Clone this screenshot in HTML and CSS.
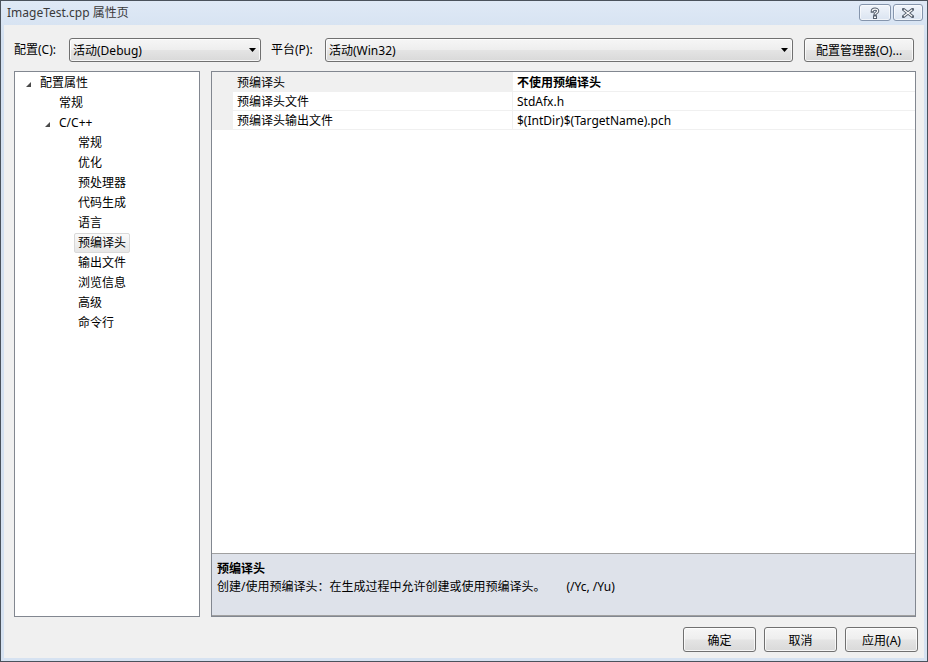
FILE: index.html
```html
<!DOCTYPE html>
<html lang="zh-CN">
<head>
<meta charset="utf-8">
<title>ImageTest.cpp 属性页</title>
<link rel="stylesheet" href="styles.css">
</head>
<body>
<div class="window">
  <div class="titlebar">
    <span class="title">ImageTest.cpp 属性页</span>
    <div class="caption-buttons">
      <span class="cap-btn help">
        <svg width="10" height="12" viewBox="0 0 10 12">
          <path d="M2.3 4.2 C2.3 1.4 7.7 1.4 7.7 4 C7.7 5.7 5 5.8 5 7.6" fill="none" stroke="#56606e" stroke-width="3.2" stroke-linecap="square"/>
          <path d="M2.3 4.2 C2.3 1.4 7.7 1.4 7.7 4 C7.7 5.7 5 5.8 5 7.6" fill="none" stroke="#fdfdfd" stroke-width="1.2"/>
          <rect x="3.5" y="9" width="3" height="2.5" fill="#fdfdfd" stroke="#56606e" stroke-width="1"/>
        </svg>
      </span>
      <span class="cap-btn close">
        <svg width="12" height="10" viewBox="0 0 12 10">
          <path d="M1.5 1.5 L10.5 8.5 M10.5 1.5 L1.5 8.5" fill="none" stroke="#56606e" stroke-width="3.2" stroke-linecap="square"/>
          <path d="M1.8 1.7 L10.2 8.3 M10.2 1.7 L1.8 8.3" fill="none" stroke="#fdfdfd" stroke-width="1.2"/>
        </svg>
      </span>
    </div>
  </div>

  <div class="client">
    <div class="toprow">
      <span class="lbl lbl-config">配置(C):</span>
      <div class="combo combo-config">
        <span>活动(Debug)</span>
        <svg class="arrow" width="7" height="4" viewBox="0 0 7 4"><polygon points="0,0 7,0 3.5,4" fill="#000"/></svg>
      </div>
      <span class="lbl lbl-platform">平台(P):</span>
      <div class="combo combo-platform">
        <span>活动(Win32)</span>
        <svg class="arrow" width="7" height="4" viewBox="0 0 7 4"><polygon points="0,0 7,0 3.5,4" fill="#000"/></svg>
      </div>
      <button class="btn btn-manager">配置管理器(O)...</button>
    </div>

    <div class="main">
      <div class="tree">
        <div class="node l0"><span class="exp"><svg width="5" height="5" viewBox="0 0 5 5"><polygon points="5,0 5,5 0,5" fill="#4a4a4a"/></svg></span><span class="txt">配置属性</span></div>
        <div class="node l1"><span class="exp"></span><span class="txt">常规</span></div>
        <div class="node l1"><span class="exp"><svg width="5" height="5" viewBox="0 0 5 5"><polygon points="5,0 5,5 0,5" fill="#4a4a4a"/></svg></span><span class="txt">C/C++</span></div>
        <div class="node l2"><span class="exp"></span><span class="txt">常规</span></div>
        <div class="node l2"><span class="exp"></span><span class="txt">优化</span></div>
        <div class="node l2"><span class="exp"></span><span class="txt">预处理器</span></div>
        <div class="node l2"><span class="exp"></span><span class="txt">代码生成</span></div>
        <div class="node l2"><span class="exp"></span><span class="txt">语言</span></div>
        <div class="node l2"><span class="exp"></span><span class="txt selected">预编译头</span></div>
        <div class="node l2"><span class="exp"></span><span class="txt">输出文件</span></div>
        <div class="node l2"><span class="exp"></span><span class="txt">浏览信息</span></div>
        <div class="node l2"><span class="exp"></span><span class="txt">高级</span></div>
        <div class="node l2"><span class="exp"></span><span class="txt">命令行</span></div>
      </div>

      <div class="panel">
        <div class="grid">
          <div class="row row-first row-selected">
            <div class="gutter"></div>
            <div class="name">预编译头</div>
            <div class="value value-bold">不使用预编译头</div>
          </div>
          <div class="row">
            <div class="gutter"></div>
            <div class="name">预编译头文件</div>
            <div class="value">StdAfx.h</div>
          </div>
          <div class="row">
            <div class="gutter"></div>
            <div class="name">预编译头输出文件</div>
            <div class="value">$(IntDir)$(TargetName).pch</div>
          </div>
        </div>
        <div class="desc">
          <div class="desc-title">预编译头</div>
          <div class="desc-text">创建/使用预编译头：在生成过程中允许创建或使用预编译头。<span class="switches">(/Yc, /Yu)</span></div>
        </div>
      </div>
    </div>

    <div class="bottomrow">
      <button class="btn btn-dlg">确定</button>
      <button class="btn btn-dlg">取消</button>
      <button class="btn btn-dlg">应用(A)</button>
    </div>
  </div>
</div>
</body>
</html>
```

FILE: styles.css
```css
* {
  box-sizing: border-box;
}

html,
body {
  margin: 0;
  padding: 0;
}

body {
  width: 928px;
  height: 662px;
  overflow: hidden;
  font-family: "Noto Sans", "Noto Sans CJK SC", sans-serif;
  font-size: 12px;
  color: #000;
  background: #f0f0f0;
}

.window {
  width: 928px;
  height: 662px;
  border: 1px solid #4a525c;
  background: linear-gradient(#dfe9f6, #d3e0f0 40px, #d6e2f1);
  padding: 0 3px 3px 3px;
  display: flex;
  flex-direction: column;
}

/* ---------- title bar ---------- */
.titlebar {
  height: 24px;
  flex: none;
  display: flex;
  justify-content: space-between;
  padding-left: 3px;
  padding-right: 1px;
}

.title {
  line-height: 24px;
  color: #3a3a3a;
}

.caption-buttons {
  display: flex;
  gap: 2px;
  margin-top: 3px;
  height: 17px;
}

.cap-btn {
  height: 17px;
  border: 1px solid #8595ac;
  border-radius: 3px;
  background: linear-gradient(#f1f5fb, #dae4f1);
  box-shadow: inset 0 0 0 1px rgba(255, 255, 255, 0.6);
  display: flex;
  align-items: center;
  justify-content: center;
}

.help {
  width: 32px;
}

.close {
  width: 30px;
}

/* ---------- client area ---------- */
.client {
  flex: 1;
  background: #f0f0f0;
  padding: 13px 6px 6px 10px;
  display: flex;
  flex-direction: column;
}

.toprow {
  display: flex;
  align-items: center;
  height: 24px;
  flex: none;
}

.lbl {
  line-height: 24px;
  white-space: nowrap;
}

.lbl-config {
  width: 55px;
}

.lbl-platform {
  width: 54px;
  margin-left: 10px;
}

.combo,
.btn {
  border: 1px solid #707070;
  border-radius: 3px;
  background: linear-gradient(#f6f6f6 0%, #eeeeee 48%, #e4e4e4 52%, #d9d9d9 100%);
  box-shadow: inset 0 0 0 1px rgba(255, 255, 255, 0.75);
}

.combo {
  height: 24px;
  display: flex;
  align-items: center;
  justify-content: space-between;
  padding: 0 4px 0 3px;
  white-space: nowrap;
}

.combo-config {
  width: 192px;
}

.combo-platform {
  width: 468px;
}

.arrow {
  flex: none;
}

.btn {
  font: inherit;
  color: #000;
  padding: 0;
  white-space: nowrap;
}

.btn-manager {
  width: 110px;
  height: 24px;
  margin-left: 11px;
}

/* ---------- main area ---------- */
.main {
  display: flex;
  gap: 11px;
  margin-top: 9px;
  margin-right: 2px;
  height: 546px;
  flex: none;
}

.tree {
  width: 186px;
  border: 1px solid #828790;
  background: #fff;
  padding-top: 1px;
}

.node {
  height: 20px;
  line-height: 18px;
  display: flex;
  align-items: center;
  white-space: nowrap;
}

.node.l1 {
  padding-left: 19px;
}

.node.l2 {
  padding-left: 38px;
}

.exp {
  width: 25px;
  flex: none;
  display: flex;
  padding-left: 11px;
  padding-top: 2px;
}

.txt.selected {
  margin-left: -4px;
  padding: 0 3px;
  height: 20px;
  line-height: 18px;
  border: 1px solid #d9d9d9;
  border-radius: 2px;
  background: linear-gradient(#fafafa, #e6e6e6);
}

.panel {
  flex: 1;
  border: 1px solid #828790;
  background: #fff;
  display: flex;
  flex-direction: column;
}

.grid {
  flex: 1;
}

.row {
  display: flex;
  height: 19px;
  border-bottom: 1px solid #f0f0f0;
  line-height: 20px;
  white-space: nowrap;
}

.row-first {
  height: 20px;
  line-height: 21px;
}

.gutter {
  width: 21px;
  flex: none;
  background: #f0f0f0;
}

.name {
  width: 280px;
  flex: none;
  padding-left: 4px;
  border-right: 1px solid #f0f0f0;
}

.row-selected .name {
  background: #f0f0f0;
}

.value {
  flex: 1;
  padding-left: 4px;
}

.value-bold {
  font-weight: bold;
}

.desc {
  height: 63px;
  flex: none;
  border-top: 1px solid #a0a0a0;
  border-bottom: 1px solid #a0a0a0;
  background: #dee2ea;
  padding: 6px 0 0 5px;
  line-height: 18px;
  white-space: nowrap;
}

.desc-title {
  font-weight: bold;
}

.switches {
  margin-left: 21px;
}

/* ---------- bottom buttons ---------- */
.bottomrow {
  display: flex;
  justify-content: flex-end;
  gap: 8px;
  margin-top: 10px;
  height: 25px;
  flex: none;
}

.btn-dlg {
  width: 73px;
  height: 25px;
}
```
